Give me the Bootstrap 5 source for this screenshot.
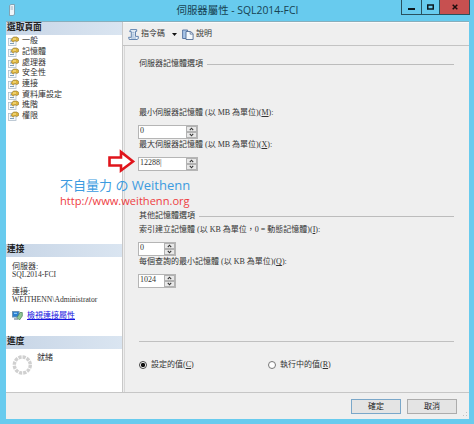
<!DOCTYPE html>
<html lang="zh-Hant">
<head>
  <meta charset="UTF-8" />
  <meta name="viewport" content="width=device-width, initial-scale=1.0"/>
  <title>伺服器屬性 - SQL2014-FCI</title>
  <link rel="stylesheet" href="https://cdn.jsdelivr.net/npm/bootstrap@5.3.2/dist/css/bootstrap.min.css"/>
  <style>
    body {
      width: 474px;
      height: 424px;
      overflow: hidden;
      background: #68cbee;
      color: #333;
      font: 8px/10px "Liberation Serif", "Noto Sans CJK TC", serif;
      white-space: nowrap;
    }
    svg { display: block; flex: none; }
    u { text-underline-offset: 1px; }

    .window { padding: 0 5px 5px 6px; }
    .titlebar { height: 21px; }
    .app-icon { left: 2px; top: 4px; }
    .caption {
      color: #164252;
      font: 10.4px/20px "Open Sans", "Noto Sans CJK TC", sans-serif;
    }
    .win-buttons { height: 15px; width: 69px; border: 1px solid #29515f; border-top: 0; right: -1px; top: 0; }
    .win-buttons span + span { border-left: 1px solid #29515f; }
    .win-min { width: 19px; }
    .win-max { width: 18px; }
    .win-close { background: #c75050; }

    .client { height: 398px; background: #efefef; border-top: 1px solid #88aebc; }
    .sidebar { width: 117px; background: #fff; border-right: 1px solid #c8c8c8; }
    .side-head {
      height: 13px;
      padding-left: 1px;
      font-size: 8.7px;
      line-height: 10px;
      font-weight: 700;
      color: #222;
      background: linear-gradient(90deg, #c7d5e6, #dae5f1);
    }
    .pages { padding: 1px 0 0 2px; height: 209px; }
    .page-item { height: 10.7px; gap: 3px; }
    .conn-info { height: 79px; padding: 6px 0 0 6px; line-height: 8px; }
    .latin { font-size: 7.65px; }
    .conn-second { margin-top: 9px; }
    .conn-more { margin-top: 7px; }
    .conn-link { color: #1414e0; text-decoration: underline; }
    .status { padding: 4px 0 0 6px; gap: 4px; }

    .toolbar { height: 24px; padding-left: 5px; border-bottom: 1px solid #c3c3c3; border-top: 1px solid #fafafa; }
    .tool-label { margin-left: 2px; }
    .tool-caret { margin-left: 7px; margin-right: 5px; }
    .content-pane { padding: 12px 15px 0 14px; border-left: 1px solid #d7d7d7; margin-left: 1px; height: 346px; }
    .group-title { height: 12px; line-height: 12px; gap: 4px; }
    .group-title::after { content: ""; flex: 1; height: 1px; background: #bcbcbc; }
    .group-other { margin-top: 39px; margin-bottom: 2px; }
    .group-server { margin-bottom: 37px; }
    .field-label { height: 18px; line-height: 12px; }
    .spinner { width: 60px; height: 14px; margin-left: -1px; background: #fff; border: 1px solid #b5b5b5; }
    .spinner-sm { width: 38px; }
    .spinner input { min-width: 0; width: 100%; border: 0; padding: 0 0 3px 1px; background: none; font: inherit; color: #333; outline: 0; }
    .spin-keys { width: 11px; flex: none; }
    .spin-keys span { flex: 1; background: #e8e8e8; border: 1px solid #b2b2b2; }
    .pane-rule { margin: 53px 0 18px; }
    .mode-configured { width: 129px; }
    .radio-dot { width: 8px; height: 8px; border: 1px solid #777; border-radius: 50%; background: #fff; }
    .radio-dot.on { border-color: #444; background: radial-gradient(#111 0 1.9px, #fff 2.4px); }

    .footer-bar { height: 27px; border-top: 1px solid #c6c6c6; padding: 6px 12px 0 0; gap: 6px; }
    .dialog-btn { width: 50px; height: 15px; padding: 0; border: 1px solid #acacac; background: #e4e4e4; color: #222; font: inherit; line-height: 12px; }
    .dialog-btn.default-btn { border-color: #7aa7c9; }

    .watermark { left: 60px; top: 176px; font-family: "Open Sans", "Noto Sans CJK TC", sans-serif; }
    .mark-name { color: #3c9be0; font-size: 13px; line-height: 18px; }
    .mark-url { color: #ee3d42; font-size: 11.1px; line-height: 14px; }
    .pointer { left: 107px; top: 149px; }
    .grip { right: 1px; bottom: 1px; }
  </style>
</head>
<body>
  <!-- shared icons -->
  <svg width="0" height="0" class="position-absolute">
    <symbol id="icon-page" viewBox="0 0 11 10">
      <rect x=".5" y="2.5" width="7.5" height="7" fill="#f7fafc" stroke="#aebdcb" stroke-width=".8"/>
      <path d="M2 5h2M2 7.5h4" stroke="#6f92b3" stroke-width=".9"/>
      <path d="M3 3.8 5.4 1h3.4l2 1.4v2L8.8 5.6 7 4.7 5 6.2z" fill="#dcb23c" stroke="#8a7433" stroke-width=".6"/>
      <path d="M5 3h3" stroke="#fff0a0"/>
    </symbol>
    <symbol id="icon-up" viewBox="0 0 9 4"><path d="M2.8 3.1 4.5 1.2l1.7 1.9" fill="none" stroke="#333" stroke-width="1.1"/></symbol>
    <symbol id="icon-down" viewBox="0 0 9 4"><path d="M2.8.9 4.500 2.800l1.700-1.900" fill="none" stroke="#333" stroke-width="1.1"/></symbol>
  </svg>

  <div class="window position-relative">
    <header class="titlebar position-relative d-flex justify-content-center">
      <svg class="app-icon position-absolute" width="8" height="12" viewBox="0 0 8 12">
        <path d="M1.5 1.5 3 .5h3.500v10L5 11.500H1.500z" fill="#eef5fa" stroke="#7893a2" stroke-width=".8"/>
        <path d="M2.500 3h2.600M2.500 5h2.600" stroke="#8ba6b5" stroke-width=".8"/>
      </svg>
      <div class="caption">伺服器屬性 - SQL2014-FCI</div>
      <div class="win-buttons position-absolute d-flex">
        <span class="win-min d-flex align-items-center justify-content-center"><svg width="7" height="7"><path d="M0 5h7" stroke="#0d1a20" stroke-width="2"/></svg></span>
        <span class="win-max d-flex align-items-center justify-content-center"><svg width="7" height="6"><rect x=".75" y="1" width="5.5" height="4" fill="none" stroke="#0d1a20" stroke-width="1.5"/></svg></span>
        <span class="win-close flex-fill d-flex align-items-center justify-content-center"><svg width="6" height="6"><path d="m.7.7 4.6 4.6m0-4.6L.7 5.3" stroke="#1d0d0d" stroke-width="1.5"/></svg></span>
      </div>
    </header>

    <div class="client position-relative">
      <div class="d-flex">
        <aside class="sidebar flex-shrink-0">
          <div class="side-head">選取頁面</div>
          <div class="pages">
            <div class="page-item d-flex align-items-center"><svg width="11" height="10"><use href="#icon-page"/></svg>一般</div>
            <div class="page-item d-flex align-items-center"><svg width="11" height="10"><use href="#icon-page"/></svg>記憶體</div>
            <div class="page-item d-flex align-items-center"><svg width="11" height="10"><use href="#icon-page"/></svg>處理器</div>
            <div class="page-item d-flex align-items-center"><svg width="11" height="10"><use href="#icon-page"/></svg>安全性</div>
            <div class="page-item d-flex align-items-center"><svg width="11" height="10"><use href="#icon-page"/></svg>連接</div>
            <div class="page-item d-flex align-items-center"><svg width="11" height="10"><use href="#icon-page"/></svg>資料庫設定</div>
            <div class="page-item d-flex align-items-center"><svg width="11" height="10"><use href="#icon-page"/></svg>進階</div>
            <div class="page-item d-flex align-items-center"><svg width="11" height="10"><use href="#icon-page"/></svg>權限</div>
          </div>
          <div class="side-head">連接</div>
          <div class="conn-info">
            <div>伺服器:</div>
            <div class="latin">SQL2014-FCI</div>
            <div class="conn-second">連接:</div>
            <div class="latin">WEITHENN\Administrator</div>
            <div class="conn-more d-flex align-items-center gap-1">
              <svg width="11" height="10" viewBox="0 0 11 10">
                <rect x=".5" y=".5" width="6.5" height="5.5" fill="#2a7fd0" stroke="#6d93b5"/>
                <path d="M2 2.3h3" stroke="#a9dcff"/>
                <path d="M2 8h4" stroke="#8698a8" stroke-width="1.5"/>
                <path d="M8 1.5h2.3V5L7.5 9 5 6.5z" fill="#8fc793" stroke="#497d57" stroke-width=".7"/>
              </svg>
              <a class="conn-link" href="#">檢視連接屬性</a>
            </div>
          </div>
          <div class="side-head">進度</div>
          <div class="status d-flex">
            <svg width="21" height="24" viewBox="0 0 21 24">
              <circle cx="10.3" cy="12" r="8" fill="none" stroke="#d0d0d0" stroke-width="3.4" stroke-dasharray="3.2 .99"/>
            </svg>
            <span>就緒</span>
          </div>
        </aside>

        <main class="flex-fill">
          <div class="toolbar d-flex align-items-center">
            <svg width="11" height="11" viewBox="0 0 11 11">
              <path d="M2.5.6h6.2v1.8H7.5v5h2.8v2.2L9 10.5H1.2L.6 8.3h2.7V2.6H1.7z" fill="#edf4fb" stroke="#5378a8" stroke-width=".9"/>
              <path d="M4.2 3.3h2.3M4.2 5.1h2.3M4 7h2.5M3 9h5" stroke="#7799c2" stroke-width=".8"/>
            </svg>
            <span class="tool-label">指令碼</span>
            <svg class="tool-caret" width="5" height="3"><path d="M0 0h5L2.5 3z" fill="#111"/></svg>
            <svg width="12" height="11" viewBox="0 0 12 11">
              <path d="M.6 1h5v8.5h-5z" fill="#a9c5e8" stroke="#516f9d" stroke-width=".9"/>
              <path d="M4 2.5h4.5l2.6 2.2v5.8H4z" fill="#f5f9fd" stroke="#546d95" stroke-width=".9"/>
              <path d="M8.2 2.8v2.3h2.6" fill="none" stroke="#546d95" stroke-width=".8"/>
            </svg>
            <span class="tool-label">說明</span>
          </div>

          <div class="content-pane">
            <div class="group-title group-server d-flex align-items-center">伺服器記憶體選項</div>
            <div class="field-label">最小伺服器記憶體 (以 MB 為單位)(<u>M</u>):</div>
            <div class="spinner d-flex">
              <input value="0" aria-label="最小伺服器記憶體">
              <div class="spin-keys d-flex flex-column"><span class="d-flex align-items-center"><svg width="9" height="4"><use href="#icon-up"/></svg></span><span class="d-flex align-items-center"><svg width="9" height="4"><use href="#icon-down"/></svg></span></div>
            </div>
            <div class="field-label">最大伺服器記憶體 (以 MB 為單位)(<u>X</u>):</div>
            <div class="spinner d-flex">
              <input value="12288|" aria-label="最大伺服器記憶體">
              <div class="spin-keys d-flex flex-column"><span class="d-flex align-items-center"><svg width="9" height="4"><use href="#icon-up"/></svg></span><span class="d-flex align-items-center"><svg width="9" height="4"><use href="#icon-down"/></svg></span></div>
            </div>

            <div class="group-title group-other d-flex align-items-center">其他記憶體選項</div>
            <div class="field-label">索引建立記憶體 (以 KB 為單位，0 = 動態記憶體)(<u>I</u>):</div>
            <div class="spinner spinner-sm d-flex">
              <input value="0" aria-label="索引建立記憶體">
              <div class="spin-keys d-flex flex-column"><span class="d-flex align-items-center"><svg width="9" height="4"><use href="#icon-up"/></svg></span><span class="d-flex align-items-center"><svg width="9" height="4"><use href="#icon-down"/></svg></span></div>
            </div>
            <div class="field-label">每個查詢的最小記憶體 (以 KB 為單位)(<u>Q</u>):</div>
            <div class="spinner spinner-sm d-flex">
              <input value="1024" aria-label="每個查詢的最小記憶體">
              <div class="spin-keys d-flex flex-column"><span class="d-flex align-items-center"><svg width="9" height="4"><use href="#icon-up"/></svg></span><span class="d-flex align-items-center"><svg width="9" height="4"><use href="#icon-down"/></svg></span></div>
            </div>

            <hr class="pane-rule">
            <div class="row g-0">
              <label class="mode-configured d-flex align-items-center"><span class="radio-dot on me-1"></span>設定的值(<u>C</u>)</label>
              <label class="col d-flex align-items-center"><span class="radio-dot me-1"></span>執行中的值(<u>R</u>)</label>
            </div>
          </div>
        </main>
      </div>

      <footer class="footer-bar d-flex justify-content-end">
        <button class="dialog-btn default-btn">確定</button>
        <button class="dialog-btn">取消</button>
      </footer>
      <svg class="grip position-absolute" width="6" height="6"><path d="M4 0h1v1H4zM4 3h1v1H4zM1 3h1v1H1z" fill="#c0c0c0"/></svg>
    </div>

    <!-- annotations over the dialog -->
    <svg class="pointer position-absolute" width="29" height="25"><path d="M2.5 8.5H14V3l12 9.5-12 9v-5H2.5z" fill="#fff" stroke="#e0141b" stroke-width="2.6"/></svg>
    <div class="watermark position-absolute">
      <div class="mark-name">不自量力 の Weithenn</div>
      <div class="mark-url">http://www.weithenn.org</div>
    </div>
  </div>

  <script src="https://cdn.jsdelivr.net/npm/bootstrap@5.3.2/dist/js/bootstrap.bundle.min.js"></script>
</body>
</html>
